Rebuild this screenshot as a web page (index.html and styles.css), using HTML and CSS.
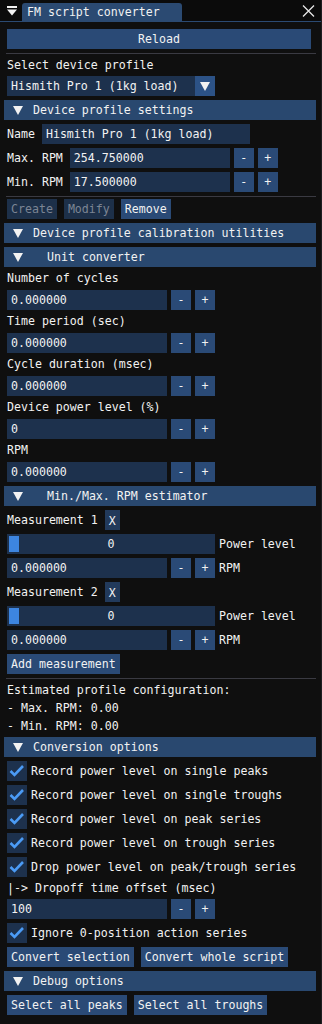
FILE: index.html
```html
<!DOCTYPE html>
<html>
<head>
<meta charset="utf-8">
<link rel="stylesheet" href="styles.css">
</head>
<body>
<div class="window">
  <div class="titlebar">
    <div class="menu-btn">
      <svg width="10" height="10" viewBox="0 0 10 10"><rect x="0" y="0" width="10" height="2" fill="#f2f2f2"/><polygon points="0,3.5 10,3.5 5,9.5" fill="#f2f2f2"/></svg>
    </div>
    <div class="tab">FM script converter</div>
    <div class="spacer"></div>
    <svg class="close" width="13" height="12" viewBox="0 0 13 12"><path d="M1 0.5 L12 11.5 M12 0.5 L1 11.5" stroke="#e6e6e6" stroke-width="1.3" fill="none"/></svg>
  </div>
  <div class="content">
    <div class="btn full">Reload</div>
    <div class="sep"></div>
    <div class="text">Select device profile</div>
    <div class="combo"><span class="combo-text">Hismith Pro 1 (1kg load)</span><span class="combo-arrow"><svg width="10" height="9" viewBox="0 0 10 9"><polygon points="0,0 10,0 5,9" fill="#f2f2f2"/></svg></span></div>
    <div class="header"><svg class="arrow" width="10" height="9" viewBox="0 0 10 9"><polygon points="0,0 10,0 5,9" fill="#f2f2f2"/></svg><span>Device profile settings</span></div>
    <div class="row"><span class="label">Name</span><div class="input w208">Hismith Pro 1 (1kg load)</div></div>
    <div class="row"><span class="label">Max. RPM</span><div class="stepper"><div class="input">254.750000</div><div class="step">-</div><div class="step">+</div></div></div>
    <div class="row"><span class="label">Min. RPM</span><div class="stepper"><div class="input">17.500000</div><div class="step">-</div><div class="step">+</div></div></div>
    <div class="sep sep2"></div>
    <div class="row"><div class="btn disabled">Create</div><div class="btn disabled">Modify</div><div class="btn">Remove</div></div>
    <div class="header"><svg class="arrow" width="10" height="9" viewBox="0 0 10 9"><polygon points="0,0 10,0 5,9" fill="#f2f2f2"/></svg><span>Device profile calibration utilities</span></div>
    <div class="header nested"><svg class="arrow" width="10" height="9" viewBox="0 0 10 9"><polygon points="0,0 10,0 5,9" fill="#f2f2f2"/></svg><span>Unit converter</span></div>
    <div class="text tall">Number of cycles</div>
    <div class="stepper"><div class="input">0.000000</div><div class="step">-</div><div class="step">+</div></div>
    <div class="text tall">Time period (sec)</div>
    <div class="stepper"><div class="input">0.000000</div><div class="step">-</div><div class="step">+</div></div>
    <div class="text tall">Cycle duration (msec)</div>
    <div class="stepper"><div class="input">0.000000</div><div class="step">-</div><div class="step">+</div></div>
    <div class="text tall">Device power level (%)</div>
    <div class="stepper"><div class="input">0</div><div class="step">-</div><div class="step">+</div></div>
    <div class="text tall">RPM</div>
    <div class="stepper"><div class="input">0.000000</div><div class="step">-</div><div class="step">+</div></div>
    <div class="header nested"><svg class="arrow" width="10" height="9" viewBox="0 0 10 9"><polygon points="0,0 10,0 5,9" fill="#f2f2f2"/></svg><span>Min./Max. RPM estimator</span></div>
    <div class="row"><span class="label">Measurement 1</span><div class="btn small">X</div></div>
    <div class="row tight"><div class="slider"><div class="grab"></div><span>0</span></div><span class="label">Power level</span></div>
    <div class="row tight"><div class="stepper"><div class="input">0.000000</div><div class="step">-</div><div class="step">+</div></div><span class="label">RPM</span></div>
    <div class="row"><span class="label">Measurement 2</span><div class="btn small">X</div></div>
    <div class="row tight"><div class="slider"><div class="grab"></div><span>0</span></div><span class="label">Power level</span></div>
    <div class="row tight"><div class="stepper"><div class="input">0.000000</div><div class="step">-</div><div class="step">+</div></div><span class="label">RPM</span></div>
    <div class="row"><div class="btn">Add measurement</div></div>
    <div class="sep"></div>
    <div class="text">Estimated profile configuration:</div>
    <div class="text">- Max. RPM: 0.00</div>
    <div class="text">- Min. RPM: 0.00</div>
    <div class="header"><svg class="arrow" width="10" height="9" viewBox="0 0 10 9"><polygon points="0,0 10,0 5,9" fill="#f2f2f2"/></svg><span>Conversion options</span></div>
    <div class="check-row"><span class="box"><svg width="20" height="20" viewBox="0 0 20 20"><polyline points="3.5,10 7.5,14 16,5" fill="none" stroke="#4b9bf5" stroke-width="2.6"/></svg></span><span>Record power level on single peaks</span></div>
    <div class="check-row"><span class="box"><svg width="20" height="20" viewBox="0 0 20 20"><polyline points="3.5,10 7.5,14 16,5" fill="none" stroke="#4b9bf5" stroke-width="2.6"/></svg></span><span>Record power level on single troughs</span></div>
    <div class="check-row"><span class="box"><svg width="20" height="20" viewBox="0 0 20 20"><polyline points="3.5,10 7.5,14 16,5" fill="none" stroke="#4b9bf5" stroke-width="2.6"/></svg></span><span>Record power level on peak series</span></div>
    <div class="check-row"><span class="box"><svg width="20" height="20" viewBox="0 0 20 20"><polyline points="3.5,10 7.5,14 16,5" fill="none" stroke="#4b9bf5" stroke-width="2.6"/></svg></span><span>Record power level on trough series</span></div>
    <div class="check-row"><span class="box"><svg width="20" height="20" viewBox="0 0 20 20"><polyline points="3.5,10 7.5,14 16,5" fill="none" stroke="#4b9bf5" stroke-width="2.6"/></svg></span><span>Drop power level on peak/trough series</span></div>
    <div class="text">|-&gt; Dropoff time offset (msec)</div>
    <div class="stepper"><div class="input">100</div><div class="step">-</div><div class="step">+</div></div>
    <div class="check-row"><span class="box"><svg width="20" height="20" viewBox="0 0 20 20"><polyline points="3.5,10 7.5,14 16,5" fill="none" stroke="#4b9bf5" stroke-width="2.6"/></svg></span><span>Ignore 0-position action series</span></div>
    <div class="row"><div class="btn">Convert selection</div><div class="btn">Convert whole script</div></div>
    <div class="header"><svg class="arrow" width="10" height="9" viewBox="0 0 10 9"><polygon points="0,0 10,0 5,9" fill="#f2f2f2"/></svg><span>Debug options</span></div>
    <div class="row"><div class="btn">Select all peaks</div><div class="btn">Select all troughs</div></div>
  </div>
</div>
</body>
</html>
```
FILE: styles.css
```css
html, body {
  margin: 0;
  padding: 0;
  background: #0f0f0f;
}
body {
  font-family: "DejaVu Sans Mono", "Liberation Mono", monospace;
  font-size: 11.6px;
  color: #f2f2f2;
}
.window {
  width: 322px;
  height: 1024px;
  overflow: hidden;
  background: #0f0f0f;
  box-sizing: border-box;
  border-right: 1px solid #1e1e22;
}
.titlebar {
  height: 21px;
  background: #0b0b0b;
  border-bottom: 1px solid #2b4a72;
  display: flex;
  align-items: flex-end;
}
.menu-btn {
  width: 22px;
  height: 21px;
  display: flex;
  align-items: center;
  padding-left: 7px;
  box-sizing: border-box;
}
.tab {
  width: 160px;
  height: 18px;
  line-height: 19px;
  background: #2b4a72;
  border-radius: 3px 3px 0 0;
  padding-left: 5px;
  box-sizing: border-box;
  white-space: nowrap;
}
.spacer { flex: 1; }
.close {
  align-self: center;
  margin-right: 6px;
}
.content {
  padding: 7px 10px 0 7px;
  display: flex;
  flex-direction: column;
  gap: 4px;
}
.btn {
  height: 20px;
  line-height: 20px;
  background: #2a4a76;
  color: #f2f2f2;
  padding: 0 4px;
  white-space: nowrap;
}
.btn.full { text-align: center; }
.btn.disabled {
  background: #1d3049;
  color: #7c8594;
}
.btn.small {
  padding: 0 4px;
  background: #223a5b;
  line-height: 22px;
}
.sep {
  height: 1px;
  background: #3a3a42;
  margin: 0 -5px 0 -1px;
}
.sep2 { margin-bottom: -2px; }
.text {
  height: 14px;
  line-height: 14px;
  white-space: nowrap;
}
.text.tall {
  height: 15px;
  line-height: 15px;
}
.combo {
  width: 208px;
  height: 20px;
  display: flex;
  background: #1d314d;
}
.combo-text {
  flex: 1;
  line-height: 20px;
  padding-left: 4px;
  white-space: nowrap;
}
.combo-arrow {
  width: 20px;
  height: 20px;
  background: #2c5286;
  display: flex;
  align-items: center;
  justify-content: center;
}
.header {
  height: 20px;
  background: #29486f;
  margin: 0 -5px 0 -3px;
  display: flex;
  align-items: center;
  padding-left: 9px;
  white-space: nowrap;
}
.header .arrow { margin-right: 10px; }
.header.nested .arrow { margin-right: 24px; }
.row {
  display: flex;
  align-items: center;
  gap: 7px;
  height: 20px;
}
.row.tight { gap: 4px; }
.label {
  line-height: 20px;
  white-space: nowrap;
}
.input {
  height: 20px;
  line-height: 20px;
  background: #1d314d;
  padding-left: 4px;
  box-sizing: border-box;
  white-space: nowrap;
}
.w208 { width: 208px; }
.stepper {
  width: 208px;
  display: flex;
  gap: 4px;
  height: 20px;
}
.stepper .input { flex: 1; }
.step {
  width: 20px;
  height: 20px;
  line-height: 20px;
  background: #2a4a76;
  text-align: center;
  flex: none;
}
.slider {
  width: 208px;
  height: 20px;
  line-height: 20px;
  background: #1d314d;
  text-align: center;
  position: relative;
  flex: none;
}
.grab {
  position: absolute;
  left: 2px;
  top: 2px;
  width: 10px;
  height: 16px;
  background: #3d85e0;
}
.check-row {
  display: flex;
  align-items: center;
  gap: 4px;
  height: 20px;
  white-space: nowrap;
}
.box {
  width: 20px;
  height: 20px;
  background: #1d314d;
  display: block;
  flex: none;
}
.box svg { display: block; }
```
